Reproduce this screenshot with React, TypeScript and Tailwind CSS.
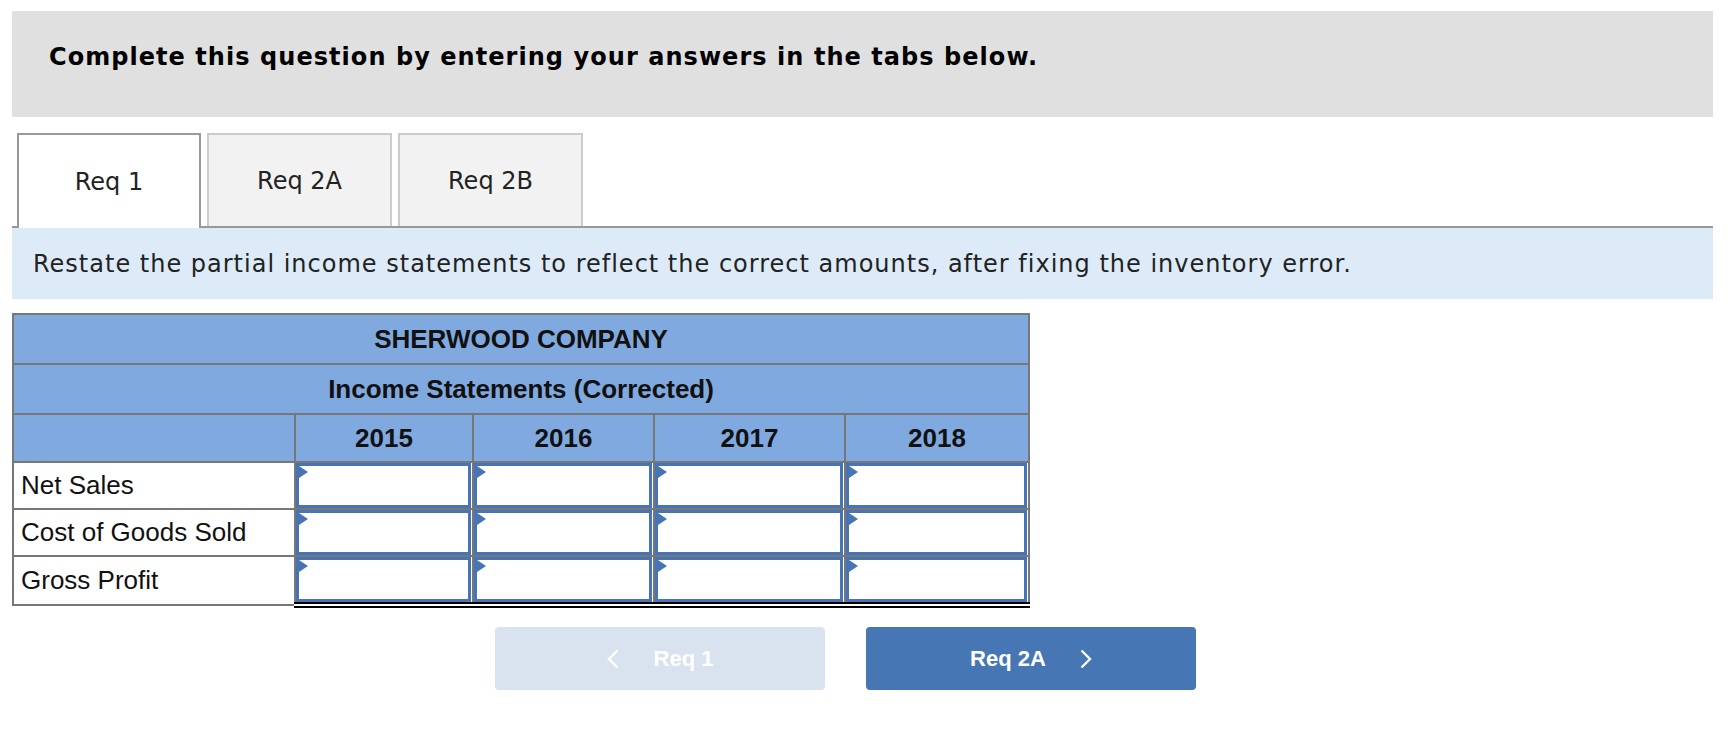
import React from 'react';

const years = ['2015', '2016', '2017', '2018'];
const colWidths = ['w-[282px]', 'w-[178px]', 'w-[181px]', 'w-[191px]', 'w-[184px]'];

const rows = [
  { label: 'Net Sales', line: 'border-b-2 border-b-[#777]' },
  { label: 'Cost of Goods Sold', line: 'border-b-2 border-b-black' },
  { label: 'Gross Profit', line: 'border-b-[6px] border-b-black border-double' },
];

function AnswerBox() {
  return (
    <div className="relative h-[45px] border-[3px] border-[#4674b4] bg-white">
      <svg className="absolute -left-[3px] -top-[2px]" width="12" height="16" viewBox="0 0 12 16">
        <polygon points="0,0 12,8 0,16" fill="#4674b4" />
      </svg>
    </div>
  );
}

function Tab({ label, active }: { label: string; active?: boolean }) {
  if (active) {
    return (
      <div className="-mb-[2px] flex h-[95px] w-[184px] items-center justify-center border-2 border-b-0 border-[#999] bg-white text-[24px] text-[#222]">
        {label}
      </div>
    );
  }
  return (
    <div className="ml-[6px] flex h-[93px] w-[185px] items-center justify-center border-2 border-b-0 border-[#ccc] bg-[#f2f2f2] text-[24px] text-[#222]">
      {label}
    </div>
  );
}

export default function App() {
  return (
    <div className="min-h-[750px] bg-white pt-[11px]">
      <div className="ml-3 w-[1701px]">
        <div
          className="h-[106px] bg-[#e0e0e0] pl-[37px] pt-[28px] text-[24px] font-bold tracking-[1.05px] text-black"
          style={{ fontFamily: '"DejaVu Sans", Verdana, sans-serif' }}
        >
          Complete this question by entering your answers in the tabs below.
        </div>

        <div
          className="mt-[16px] flex items-end border-b-2 border-[#999] pl-[5px]"
          style={{ fontFamily: '"DejaVu Sans", Verdana, sans-serif' }}
        >
          <Tab label="Req 1" active />
          <Tab label="Req 2A" />
          <Tab label="Req 2B" />
        </div>

        <div
          className="flex h-[71px] items-center bg-[#ddebf8] pl-[21px] text-[24px] tracking-[1px] text-[#222]"
          style={{ fontFamily: '"DejaVu Sans", Verdana, sans-serif' }}
        >
          Restate the partial income statements to reflect the correct amounts, after fixing the inventory error.
        </div>

        <table
          className="mt-[14px] w-[1017px] table-fixed border-collapse text-[26px] text-[#111]"
          style={{ fontFamily: '"Liberation Sans", Arial, sans-serif' }}
        >
          <colgroup>
            {colWidths.map((w) => (
              <col key={w} className={w} />
            ))}
          </colgroup>
          <thead>
            <tr className="h-[50px]">
              <th colSpan={5} className="border-2 border-[#777] bg-[#80aadf] text-center font-bold">
                SHERWOOD COMPANY
              </th>
            </tr>
            <tr className="h-[50px]">
              <th colSpan={5} className="border-2 border-[#777] bg-[#80aadf] text-center font-bold">
                Income Statements (Corrected)
              </th>
            </tr>
            <tr className="h-[48px]">
              <th className="border-2 border-[#777] bg-[#80aadf]" />
              {years.map((y) => (
                <th key={y} className="border-2 border-[#777] bg-[#80aadf] text-center font-bold">
                  {y}
                </th>
              ))}
            </tr>
          </thead>
          <tbody>
            {rows.map((r) => (
              <tr key={r.label} className="h-[47px]">
                <td className="border-2 border-[#777] bg-white pl-[7px]">{r.label}</td>
                {years.map((y) => (
                  <td key={y} className={`border-x-2 border-t-2 border-[#777] p-0 pr-[1px] ${r.line}`}>
                    <AnswerBox />
                  </td>
                ))}
              </tr>
            ))}
          </tbody>
        </table>

        <div
          className="ml-[483px] mt-[19px] flex gap-[41px] text-[22px] font-bold text-white"
          style={{ fontFamily: '"Liberation Sans", Arial, sans-serif' }}
        >
          <button className="flex h-[63px] w-[330px] items-center justify-center gap-[35px] rounded-[4px] bg-[#d9e3ef]">
            <svg width="12" height="20" viewBox="0 0 12 20" fill="none">
              <polyline points="10.5,1.5 2,10 10.5,18.5" stroke="white" strokeWidth="2.4" />
            </svg>
            <span>Req 1</span>
          </button>
          <button className="flex h-[63px] w-[330px] items-center justify-center gap-[34px] rounded-[4px] bg-[#4676b4]">
            <span>Req 2A</span>
            <svg width="12" height="20" viewBox="0 0 12 20" fill="none">
              <polyline points="1.5,1.5 10,10 1.5,18.5" stroke="white" strokeWidth="2.4" />
            </svg>
          </button>
        </div>
      </div>
    </div>
  );
}
